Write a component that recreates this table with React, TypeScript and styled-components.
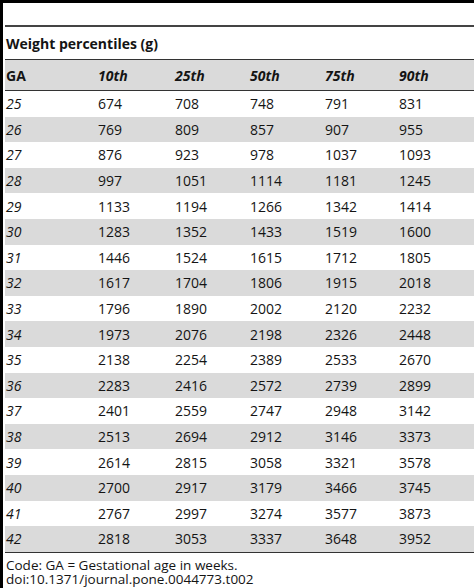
import React from "react";
import styled, { createGlobalStyle } from "styled-components";

const GlobalStyle = createGlobalStyle`
  html, body {
    margin: 0;
    padding: 0;
    background: #fff;
  }
  body {
    width: 474px;
    height: 588px;
    overflow: hidden;
    font-family: "Open Sans", "Noto Sans", sans-serif;
    color: #141414;
  }
`;

const rows: [number, number, number, number, number, number][] = [
  [25, 674, 708, 748, 791, 831],
  [26, 769, 809, 857, 907, 955],
  [27, 876, 923, 978, 1037, 1093],
  [28, 997, 1051, 1114, 1181, 1245],
  [29, 1133, 1194, 1266, 1342, 1414],
  [30, 1283, 1352, 1433, 1519, 1600],
  [31, 1446, 1524, 1615, 1712, 1805],
  [32, 1617, 1704, 1806, 1915, 2018],
  [33, 1796, 1890, 2002, 2120, 2232],
  [34, 1973, 2076, 2198, 2326, 2448],
  [35, 2138, 2254, 2389, 2533, 2670],
  [36, 2283, 2416, 2572, 2739, 2899],
  [37, 2401, 2559, 2747, 2948, 3142],
  [38, 2513, 2694, 2912, 3146, 3373],
  [39, 2614, 2815, 3058, 3321, 3578],
  [40, 2700, 2917, 3179, 3466, 3745],
  [41, 2767, 2997, 3274, 3577, 3873],
  [42, 2818, 3053, 3337, 3648, 3952],
];

const percentiles = ["10th", "25th", "50th", "75th", "90th"];

const Frame = styled.div`
  height: 588px;
  box-sizing: border-box;
  border-top: 3px solid #000;
  border-left: 3px solid #000;
  padding: 22px 0 0 2px;
`;

const Table = styled.div`
  display: flex;
  flex-direction: column;
  border-top: 2px solid #444;
  border-bottom: 1.5px solid #333;
`;

const Caption = styled.div`
  height: 32px;
  display: flex;
  align-items: center;
  padding-left: 1px;
  font-size: 14px;
  font-weight: 700;
`;

const Row = styled.div<{ $shaded?: boolean; $head?: boolean }>`
  display: grid;
  grid-template-columns: 92px 77px 75px 75px 74px 1fr;
  align-items: center;
  height: ${(p) => (p.$head ? "30px" : "25.6px")};
  background: ${(p) => (p.$shaded ? "#dadada" : "#fff")};
  font-size: 14px;
  ${(p) =>
    p.$head &&
    `
    border-top: 1.5px solid #333;
    border-bottom: 1.5px solid #333;
    font-weight: 700;
  `}
`;

const Cell = styled.div<{ $italic?: boolean }>`
  padding-left: 1px;
  font-style: ${(p) => (p.$italic ? "italic" : "normal")};
  white-space: nowrap;
`;

const Notes = styled.div`
  display: flex;
  flex-direction: column;
  padding: 5px 0 0 1px;
`;

const NoteLine = styled.div`
  height: 14px;
  font-size: 13.5px;
  line-height: 14px;
  white-space: nowrap;
`;

export default function App() {
  return (
    <>
      <GlobalStyle />
      <Frame>
        <Table>
          <Caption>Weight percentiles (g)</Caption>
          <Row $head $shaded>
            <Cell>GA</Cell>
            {percentiles.map((p) => (
              <Cell key={p} $italic>
                {p}
              </Cell>
            ))}
          </Row>
          {rows.map((r, i) => (
            <Row key={r[0]} $shaded={i % 2 === 1}>
              <Cell $italic>{r[0]}</Cell>
              {r.slice(1).map((v, j) => (
                <Cell key={j}>{v}</Cell>
              ))}
            </Row>
          ))}
        </Table>
        <Notes>
          <NoteLine>Code: GA = Gestational age in weeks.</NoteLine>
          <NoteLine>doi:10.1371/journal.pone.0044773.t002</NoteLine>
        </Notes>
      </Frame>
    </>
  );
}
